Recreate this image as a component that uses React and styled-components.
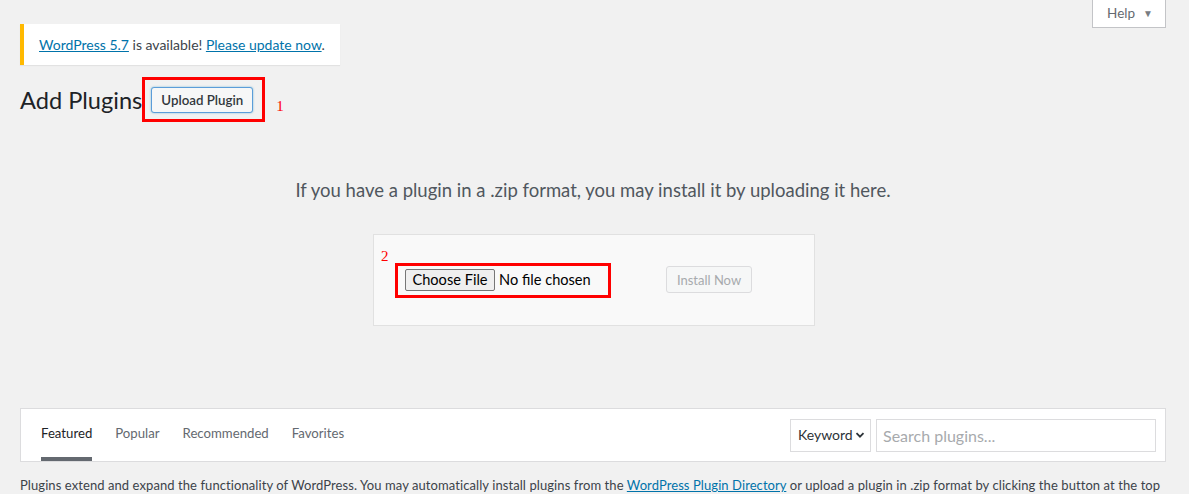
import React from "react";
import styled, { createGlobalStyle } from "styled-components";

const FONT = `"Segoe UI", Lato, "Noto Sans", sans-serif`;

const Global = createGlobalStyle`
  html, body { margin: 0; padding: 0; background: #f1f1f1; }
  body {
    font-family: ${FONT};
    font-size: 13px;
    line-height: 1.4;
    color: #3c434a;
    width: 1189px;
    height: 494px;
    overflow: hidden;
  }
  * { box-sizing: border-box; }
`;

const Wrap = styled.div`
  padding: 0 23px 0 20px;
`;

const HelpTab = styled.button`
  float: right;
  height: 28px;
  width: 74px;
  padding: 0 0 2px 2px;
  background: #fff;
  border: 1px solid #c3c4c7;
  border-top: none;
  font-family: ${FONT};
  font-size: 13.5px;
  color: #646970;
  display: flex;
  align-items: center;
  justify-content: center;
  gap: 8px;
`;

const Arrow = styled.span`
  font-size: 10px;
  color: #787c82;
`;

const Notice = styled.div`
  display: inline-block;
  margin-top: 24px;
  padding: 11px 15px;
  background: #fff;
  border-left: 4px solid #ffb900;
  box-shadow: 0 1px 1px rgba(0, 0, 0, 0.06);
  font-size: 14px;
  line-height: 19px;
  color: #3c434a;
`;

const Link = styled.a`
  color: #0073aa;
  text-decoration: underline;
`;

const TitleRow = styled.div`
  clear: both;
  display: flex;
  align-items: center;
  margin-top: 12px;
`;

const Title = styled.h1`
  margin: 0;
  font-family: ${FONT};
  font-size: 23.6px;
  font-weight: 400;
  line-height: 30px;
  color: #1d2327;
`;

const Highlight = styled.div`
  border: 3px solid #ff0000;
  display: flex;
  align-items: center;
`;

const UploadBox = styled(Highlight)`
  padding: 7px 9px 6px 6px;
`;

const PageAction = styled.button`
  height: 26px;
  width: 102px;
  padding: 0;
  border: 1px solid #5b9dd9;
  border-radius: 3px;
  background: #f6f7f7;
  box-shadow: 0 0 2px rgba(30, 140, 190, 0.6);
  font-family: ${FONT};
  font-size: 13.3px;
  font-weight: 600;
  color: #32373c;
`;

const Marker = styled.span`
  font-family: "Liberation Serif", serif;
  font-size: 15px;
  color: #ff0000;
  line-height: 17px;
`;

const Marker1 = styled(Marker)`
  margin: 13px 0 0 11px;
`;

const Marker2 = styled(Marker)`
  width: 15px;
  flex: none;
  padding: 2px 0 0 1px;
`;

const Help = styled.p`
  margin: 56px 0 0;
  text-align: center;
  font-size: 18.5px;
  line-height: 24px;
  color: #50575e;
`;

const UploadForm = styled.form`
  width: 442px;
  margin: 32px 0 0 calc(50% - 220px);
  padding: 11px 0 27px 6px;
  background: #f9f9f9;
  border: 1px solid #e1e1e1;
  display: flex;
  align-items: flex-start;
`;

const FileBox = styled(Highlight)`
  margin-top: 17px;
  width: 216px;
  height: 35px;
  padding: 0 0 1px 7px;
  gap: 4px;
`;

const FileButton = styled.span`
  height: 22px;
  width: 90px;
  display: inline-flex;
  align-items: center;
  justify-content: center;
  background: #efefef;
  border: 1px solid #767676;
  border-radius: 2px;
  font-family: ${FONT};
  font-size: 14.6px;
  color: #000;
`;

const FileLabel = styled.span`
  font-size: 14.6px;
  color: #000;
`;

const InstallButton = styled.button`
  margin: 20px 0 0 55px;
  width: 86px;
  height: 27px;
  padding: 0;
  background: #f6f7f7;
  border: 1px solid #dcdcde;
  border-radius: 3px;
  font-family: ${FONT};
  font-size: 13px;
  color: #a7aaad;
`;

const FilterBar = styled.div`
  margin-top: 82px;
  height: 54px;
  background: #fff;
  border: 1px solid #dcdcde;
  display: flex;
  align-items: stretch;
  justify-content: space-between;
  padding: 0 9px 0 9px;
`;

const Tabs = styled.ul`
  list-style: none;
  margin: 0;
  padding: 0;
  display: flex;
`;

const Tab = styled.li`
  margin: 0 12px 0 11px;
  padding: 15px 0 14px;
  line-height: 19px;
  font-size: 13.2px;
  color: ${(p) => (p.$active ? "#1d2327" : "#646970")};
  border-bottom: 4px solid ${(p) => (p.$active ? "#646970" : "transparent")};
`;

const Search = styled.div`
  display: flex;
  align-items: center;
  gap: 5px;
`;

const SelectBox = styled.div`
  width: 81px;
  height: 33px;
  border: 1px solid #dcdcde;
  display: flex;
  align-items: center;
  justify-content: space-between;
  padding: 0 5px 0 7px;
  font-size: 14px;
  color: #2c3338;
`;

const SearchInput = styled.input`
  width: 280px;
  height: 33px;
  border: 1px solid #dcdcde;
  padding: 0 6px;
  font-family: ${FONT};
  font-size: 16px;
  color: #2c3338;
  background: #fff;
  outline: none;
  &::placeholder { color: #a7aaad; }
`;

const Intro = styled.p`
  margin: 14px 0 0;
  font-size: 13px;
  letter-spacing: 0.08px;
  line-height: 19px;
  white-space: nowrap;
  color: #3c434a;
`;

export default function App() {
  return (
    <>
      <Global />
      <Wrap>
        <HelpTab>
          Help <Arrow>▼</Arrow>
        </HelpTab>
        <Notice>
          <Link href="#">WordPress 5.7</Link> is available!{" "}
          <Link href="#">Please update now</Link>.
        </Notice>
        <TitleRow>
          <Title>Add Plugins</Title>
          <UploadBox>
            <PageAction>Upload Plugin</PageAction>
          </UploadBox>
          <Marker1>1</Marker1>
        </TitleRow>
        <Help>If you have a plugin in a .zip format, you may install it by uploading it here.</Help>
        <UploadForm onSubmit={(e) => e.preventDefault()}>
          <Marker2>2</Marker2>
          <FileBox>
            <FileButton>Choose File</FileButton>
            <FileLabel>No file chosen</FileLabel>
          </FileBox>
          <InstallButton type="button" disabled>Install Now</InstallButton>
        </UploadForm>
        <FilterBar>
          <Tabs>
            <Tab $active>Featured</Tab>
            <Tab>Popular</Tab>
            <Tab>Recommended</Tab>
            <Tab>Favorites</Tab>
          </Tabs>
          <Search>
            <SelectBox>
              <span>Keyword</span>
              <svg width="10" height="10" viewBox="0 0 10 10">
                <path d="M1.5 3.2 L5 6.7 L8.5 3.2" fill="none" stroke="#2c3338" strokeWidth="1.8" />
              </svg>
            </SelectBox>
            <SearchInput placeholder="Search plugins..." />
          </Search>
        </FilterBar>
        <Intro>
          Plugins extend and expand the functionality of WordPress. You may automatically install plugins from the{" "}
          <Link href="#">WordPress Plugin Directory</Link> or upload a plugin in .zip format by clicking the button at the top
        </Intro>
      </Wrap>
    </>
  );
}
